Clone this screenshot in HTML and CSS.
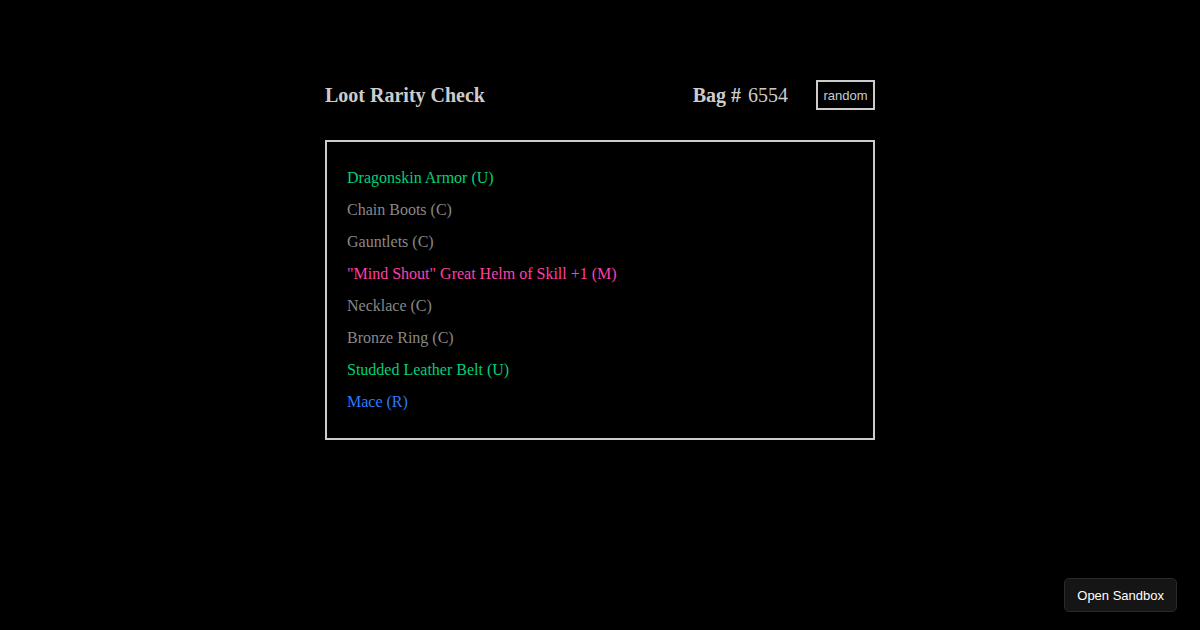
FILE: index.html
```html
<!DOCTYPE html>
<html>
<head>
<meta charset="utf-8">
<link rel="stylesheet" href="styles.css">
</head>
<body>
<div class="wrap">
  <div class="header">
    <h1 class="title">Loot Rarity Check</h1>
    <div class="bag">
      <span class="bag-label">Bag #</span>
      <span class="bag-num">6554</span>
      <button class="random">random</button>
    </div>
  </div>
  <ul class="items">
    <li class="uncommon">Dragonskin Armor (U)</li>
    <li class="common">Chain Boots (C)</li>
    <li class="common">Gauntlets (C)</li>
    <li class="mythic">"Mind Shout" Great Helm of Skill +1 (M)</li>
    <li class="common">Necklace (C)</li>
    <li class="common">Bronze Ring (C)</li>
    <li class="uncommon">Studded Leather Belt (U)</li>
    <li class="rare">Mace (R)</li>
  </ul>
</div>
<button class="sandbox">Open Sandbox</button>
</body>
</html>
```
FILE: styles.css
```css
html, body {
  margin: 0;
  padding: 0;
  background: #000;
  height: 100%;
}
body {
  font-family: "Liberation Serif", "Times New Roman", serif;
  color: #ccc;
}
.wrap {
  width: 550px;
  margin: 0 auto;
  padding-top: 80px;
}
.header {
  display: flex;
  align-items: center;
  justify-content: space-between;
  height: 30px;
}
.title {
  margin: 0;
  font-size: 20px;
  font-weight: bold;
  color: #ccc;
}
.bag {
  display: flex;
  align-items: center;
  font-size: 20px;
}
.bag-label {
  font-weight: bold;
}
.bag-num {
  margin-left: 7px;
}
.random {
  margin-left: 28px;
  height: 30px;
  width: 59px;
  padding: 0;
  background: #000;
  color: #ccc;
  border: 2px solid #ccc;
  font-family: "Liberation Sans", Arial, sans-serif;
  font-size: 13px;
}
.items {
  list-style: none;
  margin: 30px 0 0 0;
  padding: 20px 20px 20px;
  border: 2px solid #ccc;
  font-size: 16px;
  line-height: 32px;
}
.common { color: #888; }
.uncommon { color: #00d07a; }
.mythic { color: #ff3fa8; }
.rare { color: #2a7bff; }
.sandbox {
  position: fixed;
  right: 23px;
  bottom: 18px;
  height: 34px;
  padding: 0 12px;
  background: #151515;
  color: #fff;
  border: 1px solid #2a2a2a;
  border-radius: 5px;
  font-family: "Liberation Sans", Arial, sans-serif;
  font-size: 13px;
}
```
